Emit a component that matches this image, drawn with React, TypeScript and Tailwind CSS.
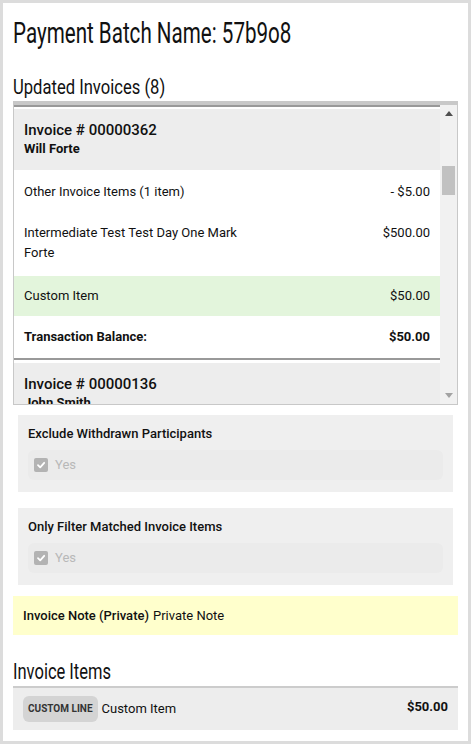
import React from 'react';

const Caret = ({ up, color }: { up?: boolean; color: string }) => (
  <svg width="8" height="5" viewBox="0 0 8 5">
    <path d={up ? 'M0 5L4 0L8 5Z' : 'M0 0L8 0L4 5Z'} fill={color} />
  </svg>
);

const CheckBox = () => (
  <span className="flex h-[14px] w-[14px] items-center justify-center rounded-[2px] bg-[#b3b3b3]">
    <svg width="10" height="10" viewBox="0 0 10 10">
      <path d="M2 5.2L4.2 7.3L8.2 2.8" stroke="#fff" strokeWidth="1.8" fill="none" strokeLinecap="round" strokeLinejoin="round" />
    </svg>
  </span>
);

function FilterPanel({ title }: { title: string }) {
  return (
    <div className="mx-[5px] bg-[#efefef] px-[10px] pb-[12px] pt-[10px]">
      <div className="text-[13px] font-medium leading-[18px] text-[#111]">{title}</div>
      <div className="mt-[7px] flex h-[30px] items-center gap-[7px] rounded-md bg-[#ebebeb] px-[6px]">
        <CheckBox />
        <span className="text-[13px] text-[#b8b8b8]">Yes</span>
      </div>
    </div>
  );
}

export default function App() {
  return (
    <div className="h-[744px] w-[471px] overflow-hidden border-[3px] border-[#dcdcdc] bg-white px-[10px] font-['Roboto',sans-serif] text-[#111]">
      <h1 className="pt-[13px] text-[29px] font-normal leading-[34px]">
        <span className="inline-block origin-left scale-x-[0.71] whitespace-nowrap">Payment Batch Name: 57b9o8</span>
      </h1>
      <h2 className="mt-[24px] text-[21px] font-normal leading-[26px]">
        <span className="inline-block origin-left scale-x-[0.79] whitespace-nowrap">Updated Invoices (8)</span>
      </h2>

      {/* scroll box */}
      <div className="mt-[1px] flex h-[304px] border border-t-4 border-[#c8c8c8]">
        <div className="flex-1 overflow-hidden">
          <div className="border-t-2 border-[#999] pt-[2px]">
            <div className="bg-[#ededed] px-[10px] pb-[12px] pt-[11px]">
              <div className="text-[15px] font-medium leading-[20px]">Invoice # 00000362</div>
              <div className="text-[13px] font-bold leading-[18px]">Will Forte</div>
            </div>
            <div className="flex h-[43px] items-center justify-between px-[10px] text-[13px]">
              <span>Other Invoice Items (1 item)</span>
              <span>- $5.00</span>
            </div>
            <div className="flex h-[63px] justify-between px-[10px] pt-[10px] text-[13px] leading-[20px]">
              <span className="w-[225px]">Intermediate Test Test Day One Mark Forte</span>
              <span>$500.00</span>
            </div>
            <div className="flex h-[40px] items-center justify-between bg-[#e3f5dc] px-[10px] text-[13px]">
              <span>Custom Item</span>
              <span>$50.00</span>
            </div>
            <div className="flex h-[42px] items-center justify-between px-[10px] text-[13px] font-bold">
              <span>Transaction Balance:</span>
              <span>$50.00</span>
            </div>
          </div>
          <div className="border-t-2 border-[#999] pt-[3px]">
            <div className="bg-[#ededed] px-[10px] pb-[12px] pt-[11px]">
              <div className="text-[15px] font-medium leading-[20px]">Invoice # 00000136</div>
              <div className="text-[13px] font-bold leading-[18px]">John Smith</div>
            </div>
          </div>
        </div>
        {/* scrollbar */}
        <div className="relative w-[17px] bg-[#f1f1f1]">
          <div className="flex h-[17px] items-center justify-center">
            <Caret up color="#505050" />
          </div>
          <div className="absolute left-[2px] right-[2px] top-[61px] h-[29px] bg-[#c1c1c1]" />
          <div className="absolute bottom-0 left-0 right-0 flex h-[17px] items-center justify-center">
            <Caret color="#a3a3a3" />
          </div>
        </div>
      </div>

      <div className="mt-[10px] flex flex-col gap-[16px]">
        <FilterPanel title="Exclude Withdrawn Participants" />
        <FilterPanel title="Only Filter Matched Invoice Items" />
      </div>

      <div className="mt-[11px] flex h-[39px] items-center bg-[#ffffcc] px-[10px] text-[13px]">
        <span className="font-medium">Invoice Note (Private)</span>
        <span className="ml-[4px]">Private Note</span>
      </div>

      <h2 className="mt-[24px] text-[22px] font-normal leading-[26px]">
        <span className="inline-block origin-left scale-x-[0.75] whitespace-nowrap">Invoice Items</span>
      </h2>
      <div className="mt-[1px] flex h-[44px] items-center border-t-2 border-[#ccc] bg-[#ededed] px-[10px] text-[13px]">
        <span className="rounded-md bg-[#d4d4d4] px-[5px] py-[6px] text-[10px] font-bold uppercase leading-[14px] text-[#333]">
          Custom Line
        </span>
        <span className="ml-[4px]">Custom Item</span>
        <span className="-mt-[4px] ml-auto font-bold">$50.00</span>
      </div>
    </div>
  );
}
